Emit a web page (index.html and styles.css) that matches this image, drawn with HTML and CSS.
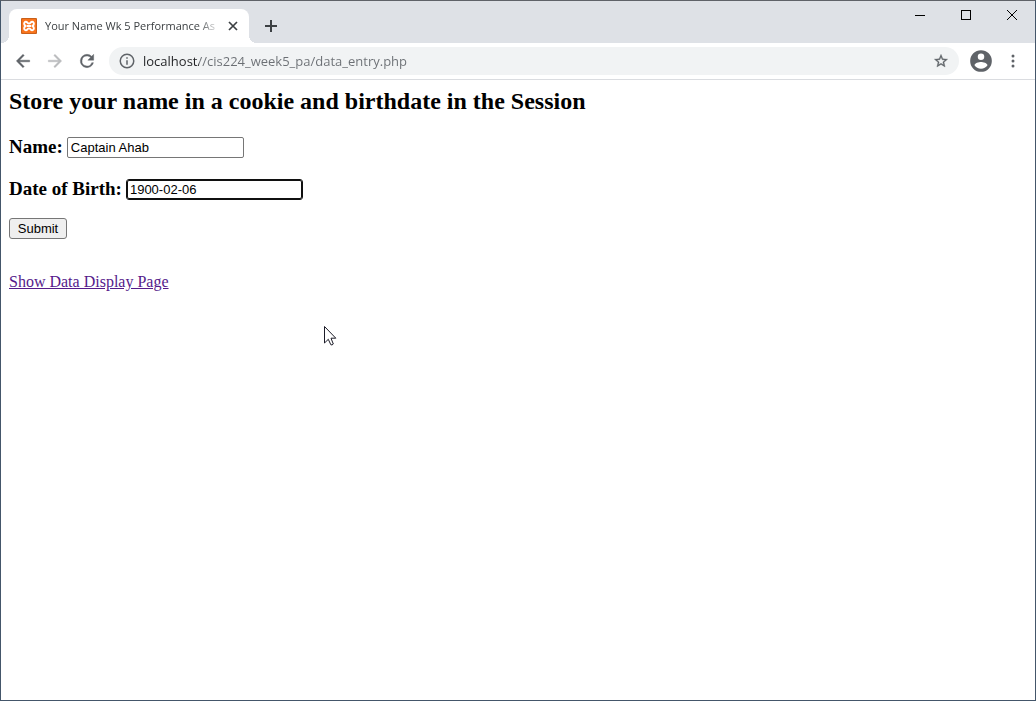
FILE: index.html
```html
<!DOCTYPE html>
<html lang="en">
<head>
    <meta charset="UTF-8">
    <title>Your Name Wk 5 Performance As</title>
    <link rel="stylesheet" href="styles.css">
</head>
<body>
    <div class="window">
        <div class="tabs">
            <div class="tab">
                <svg class="favicon" width="16" height="16" viewBox="0 0 16 16">
                    <rect width="16" height="16" rx="1" fill="#c9601a"/>
                    <rect x="1" y="1" width="14" height="14" rx="1" fill="#f9741c"/>
                    <path d="M6 8H10M5.6 8C2.6 8 2.4 3.8 4.8 3.8C6.6 3.8 6.2 5.6 8 5.6C9.8 5.6 9.4 3.8 11.2 3.8C13.6 3.8 13.4 8 10.6 8C13.4 8 13.6 12.2 11.2 12.2C9.4 12.2 9.8 10.4 8 10.4C6.2 10.4 6.6 12.2 4.8 12.2C2.4 12.2 2.6 8 5.6 8" fill="none" stroke="#fff" stroke-width="1.9"/>
                </svg>
                <span class="tab-title">Your Name Wk 5 Performance As</span>
                <button class="tab-close" aria-label="Close tab">
                    <svg width="10" height="10" viewBox="0 0 10 10"><path d="M1 1L9 9M9 1L1 9" stroke="#3c4043" stroke-width="1.7"/></svg>
                </button>
            </div>
            <button class="new-tab" aria-label="New tab">
                <svg width="12" height="12" viewBox="0 0 12 12"><path d="M6 0V12M0 6H12" stroke="#3c4043" stroke-width="2"/></svg>
            </button>
            <div class="controls">
                <button aria-label="Minimize"><svg width="10" height="10" viewBox="0 0 10 10"><path d="M0 5.5H10" stroke="#000"/></svg></button>
                <button aria-label="Maximize"><svg width="10" height="10" viewBox="0 0 10 10"><rect x=".5" y=".5" width="9" height="9" fill="none" stroke="#000"/></svg></button>
                <button aria-label="Close"><svg width="10" height="10" viewBox="0 0 10 10"><path d="M0 0L10 10M10 0L0 10" stroke="#000"/></svg></button>
            </div>
        </div>

        <div class="toolbar">
            <button aria-label="Back">
                <svg width="20" height="20" viewBox="0 0 24 24"><path fill="#5f6368" stroke="#5f6368" stroke-width=".5" d="M20 11H7.83l5.59-5.59L12 4l-8 8 8 8 1.41-1.41L7.83 13H20z"/></svg>
            </button>
            <button aria-label="Forward" disabled>
                <svg width="20" height="20" viewBox="0 0 24 24"><path fill="#babcbe" stroke="#babcbe" stroke-width=".5" d="M4 11h12.17l-5.59-5.59L12 4l8 8-8 8-1.41-1.41L16.17 13H4z"/></svg>
            </button>
            <button aria-label="Reload">
                <svg width="20" height="20" viewBox="0 0 24 24"><path fill="#5f6368" d="M17.65 6.35A7.96 7.96 0 0 0 12 4a8 8 0 1 0 7.73 10h-2.08A6 6 0 1 1 12 6c1.66 0 3.14.69 4.22 1.78L13 11h7V4z" stroke="#5f6368" stroke-width=".5"/></svg>
            </button>
            <div class="address">
                <svg width="18" height="18" viewBox="0 0 24 24"><path fill="#5f6368" d="M11 7h2v2h-2zM11 11h2v6h-2zM12 2a10 10 0 1 0 0 20 10 10 0 0 0 0-20zm0 18a8 8 0 1 1 0-16 8 8 0 0 1 0 16z"/></svg>
                <input class="url" type="text" aria-label="Address" value="localhost//cis224_week5_pa/data_entry.php">
                <button class="star" aria-label="Bookmark this page">
                    <svg width="16" height="16" viewBox="0 0 24 24"><path fill="#5f6368" stroke="#5f6368" stroke-width=".5" d="M22 9.24l-7.19-.62L12 2 9.19 8.63 2 9.24l5.46 4.73L5.82 21 12 17.27 18.18 21l-1.63-7.03zM12 15.4l-3.76 2.27 1-4.28-3.32-2.88 4.38-.38L12 6.1l1.71 4.04 4.38.38-3.32 2.88 1 4.28z"/></svg>
                </button>
            </div>
            <button class="profile" aria-label="Profile">
                <svg width="26" height="26" viewBox="0 0 24 24"><path fill="#5f6368" d="M12 2a10 10 0 1 0 0 20 10 10 0 0 0 0-20zm0 3a3 3 0 1 1 0 6 3 3 0 0 1 0-6zm0 14.2a7.2 7.2 0 0 1-6-3.22c.03-1.99 4-3.08 6-3.08s5.97 1.09 6 3.08a7.2 7.2 0 0 1-6 3.22z"/></svg>
            </button>
            <button class="menu" aria-label="Menu">
                <svg width="4" height="14" viewBox="0 0 4 14" fill="#5f6368"><circle cx="2" cy="2" r="1.5"/><circle cx="2" cy="7" r="1.5"/><circle cx="2" cy="12" r="1.5"/></svg>
            </button>
        </div>

        <div class="page">
            <h2>Store your name in a cookie and birthdate in the Session</h2>
            <form>
                <div class="field">
                    <label for="name">Name:</label>
                    <input type="text" id="name" name="name" value="Captain Ahab">
                </div>
                <div class="field">
                    <label for="dob">Date of Birth:</label>
                    <input class="active" type="text" id="dob" name="dob" value="1900-02-06">
                </div>
                <button class="submit" type="submit">Submit</button>
            </form>
            <a href="data_display.php">Show Data Display Page</a>
        </div>

        <svg class="cursor" width="13" height="20" viewBox="0 0 13 20"><path d="M.5 .5V17L4.3 13.3L6.8 18.7Q8 19.6 9.3 18L7 12.2H11.8Z" fill="#fff" stroke="#1c1c28"/></svg>
    </div>
</body>
</html>
```
FILE: styles.css
```css
* {
    box-sizing: border-box;
}
body {
    margin: 0;
    background: #fff;
    font-family: "Liberation Serif", serif;
}
svg {
    display: block;
}
.window {
    position: relative;
    min-height: 100vh;
    border: 1px solid #44566a;
    border-top-color: #5f6268;
}
.window button {
    display: flex;
    align-items: center;
    justify-content: center;
    flex: none;
}

/* tab strip */
.tabs {
    display: flex;
    height: 42px;
    padding-left: 8px;
    background: #dee1e6;
}
.tabs button,
.toolbar button {
    padding: 0;
    border: 0;
    background: none;
}
.tab {
    position: relative;
    display: flex;
    align-items: center;
    width: 240px;
    height: 34px;
    margin-top: 8px;
    padding: 0 8px 0 12px;
    border-radius: 8px 8px 0 0;
    background: #fff;
}
/* flared feet of the active tab */
.tab::before,
.tab::after {
    content: "";
    position: absolute;
    bottom: 0;
    width: 8px;
    height: 8px;
}
.tab::before {
    left: -8px;
    background: radial-gradient(circle at 0 0, transparent 8px, #fff 8px);
}
.tab::after {
    right: -8px;
    background: radial-gradient(circle at 100% 0, transparent 8px, #fff 8px);
}
.favicon {
    flex: none;
}
.tab-title {
    flex: 1;
    margin-left: 8px;
    overflow: hidden;
    white-space: nowrap;
    font: 11px/16px "Open Sans", sans-serif;
    color: #3c4043;
    -webkit-mask-image: linear-gradient(to left, transparent, #000 24px);
    mask-image: linear-gradient(to left, transparent, #000 24px);
}
.tab-close {
    width: 16px;
    height: 16px;
    margin-left: 4px;
}
.new-tab {
    width: 28px;
    height: 28px;
    margin: 11px 0 0 8px;
}
.controls {
    display: flex;
    margin-left: auto;
}
.controls button {
    width: 46px;
    height: 28px;
}

/* toolbar */
.toolbar {
    display: flex;
    align-items: center;
    height: 37px;
    padding: 0 6px;
    border-bottom: 1px solid #dadce0;
}
.toolbar button {
    width: 32px;
    height: 28px;
}
.address {
    display: flex;
    flex: 1;
    align-items: center;
    height: 28px;
    margin: 0 6px;
    padding: 0 2px 0 9px;
    border-radius: 14px;
    background: #f1f3f4;
}
.url {
    flex: 1;
    min-width: 0;
    height: 24px;
    margin-left: 7px;
    padding: 0;
    border: 0;
    outline: 0;
    font: 13px/20px "Open Sans", sans-serif;
    /* host is darker than the path */
    color: transparent;
    background: linear-gradient(to right, #202124 56px, #6b6f74 56px);
    -webkit-background-clip: text;
    background-clip: text;
}

/* page */
.page {
    padding: 8px;
}
h2 {
    margin: 0 0 22px;
    font-size: 24px;
    line-height: 27px;
}
.field {
    display: flex;
    align-items: flex-start;
    gap: 4px;
    margin-bottom: 21px;
}
.field label {
    font-size: 19px;
    line-height: 19px;
    font-weight: bold;
}
.field input {
    width: 177px;
    height: 21px;
    padding: 1px 3px;
    border: 1px solid #767676;
    border-radius: 2px;
    font: 13px "Liberation Sans", sans-serif;
    color: #000;
}
.field .active {
    outline: 1px solid #101010;
    outline-offset: -2px;
    border-color: #101010;
    border-radius: 3px;
}
.field + .submit {
    width: 58px;
    height: 21px;
    margin-top: -3px;
    padding: 0;
    border: 1px solid #767676;
    border-radius: 3px;
    background: #efefef;
    font: 13px "Liberation Sans", sans-serif;
    color: #000;
}
.page a {
    display: inline-block;
    margin-top: 34px;
    font-size: 16px;
    line-height: 18px;
    color: #551a8b;
}

.cursor {
    position: absolute;
    left: 323px;
    top: 325px;
}
```
